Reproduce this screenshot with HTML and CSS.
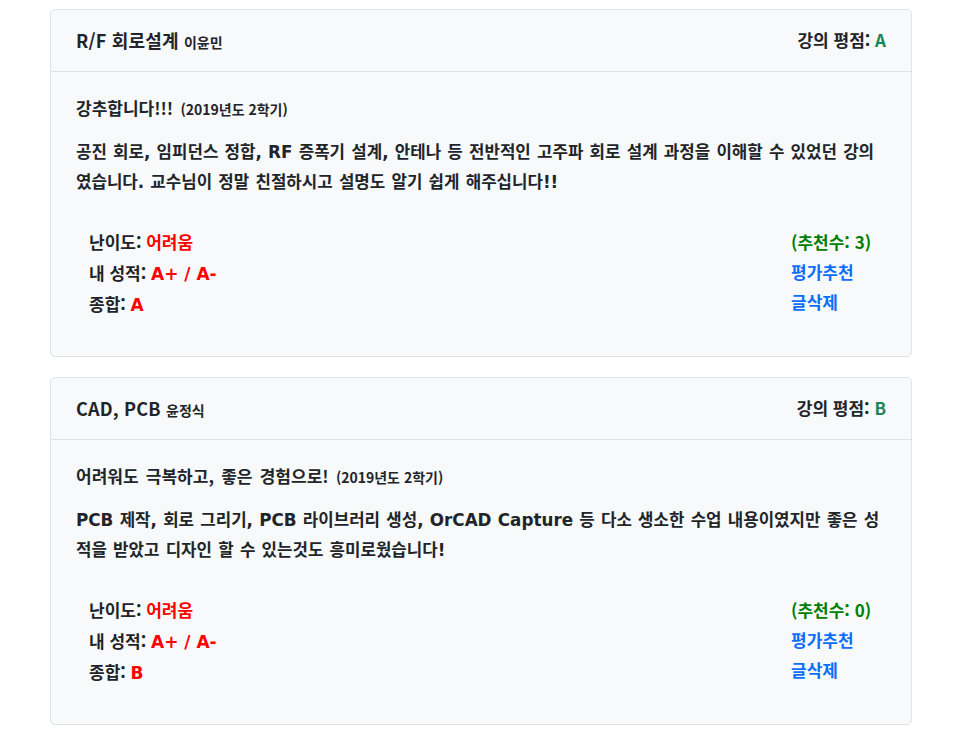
FILE: index.html
```html
<!DOCTYPE html>
<html lang="ko">
<head>
<meta charset="utf-8">
<link rel="stylesheet" href="styles.css">
</head>
<body>
<div class="list">
  <div class="card">
    <div class="card-header">
      <div class="course">R/F 회로설계 <span class="prof">이윤민</span></div>
      <div class="rating">강의 평점: <span class="grade">A</span></div>
    </div>
    <div class="card-body">
      <div class="title">강추합니다!!! <span class="term">(2019년도 2학기)</span></div>
      <p class="content">공진 회로, 임피던스 정합, RF 증폭기 설계, 안테나 등 전반적인 고주파 회로 설계 과정을 이해할 수 있었던 강의였습니다. 교수님이 정말 친절하시고 설명도 알기 쉽게 해주십니다!!</p>
      <div class="stats">
        <div class="left">
          <div>난이도: <span class="red">어려움</span></div>
          <div>내 성적: <span class="red">A+ / A-</span></div>
          <div>종합: <span class="red">A</span></div>
        </div>
        <div class="right">
          <div class="green">(추천수: 3)</div>
          <div><a class="link" href="#">평가추천</a></div>
          <div><a class="link" href="#">글삭제</a></div>
        </div>
      </div>
    </div>
  </div>
  <div class="card">
    <div class="card-header">
      <div class="course">CAD, PCB <span class="prof">윤정식</span></div>
      <div class="rating">강의 평점: <span class="grade">B</span></div>
    </div>
    <div class="card-body">
      <div class="title">어려워도 극복하고, 좋은 경험으로! <span class="term">(2019년도 2학기)</span></div>
      <p class="content">PCB 제작, 회로 그리기, PCB 라이브러리 생성, OrCAD Capture 등 다소 생소한 수업 내용이였지만 좋은 성적을 받았고 디자인 할 수 있는것도 흥미로웠습니다!</p>
      <div class="stats">
        <div class="left">
          <div>난이도: <span class="red">어려움</span></div>
          <div>내 성적: <span class="red">A+ / A-</span></div>
          <div>종합: <span class="red">B</span></div>
        </div>
        <div class="right">
          <div class="green">(추천수: 0)</div>
          <div><a class="link" href="#">평가추천</a></div>
          <div><a class="link" href="#">글삭제</a></div>
        </div>
      </div>
    </div>
  </div>
</div>
</body>
</html>
```
FILE: styles.css
```css
* { box-sizing: border-box; }
html, body { margin: 0; padding: 0; background: #fff; }
body {
  font-family: "Noto Sans CJK KR", "Noto Sans", sans-serif;
  color: #212529;
  font-weight: 700;
}
.list {
  width: 862px;
  margin: 9px 0 0 50px;
  display: flex;
  flex-direction: column;
  gap: 20px;
}
.card {
  background: #f8f9fa;
  border: 1px solid #dee2e6;
  border-radius: 5px;
}
.card-header {
  height: 62px;
  padding: 0 25px 2px;
  border-bottom: 1px solid #dee2e6;
  display: flex;
  align-items: center;
  justify-content: space-between;
}
.course { font-size: 18px; line-height: 24px; letter-spacing: 0.2px; }
.prof { font-size: 14px; line-height: 1; letter-spacing: 0; }
.rating { font-size: 17px; line-height: 24px; }
.card-body { padding: 25px 25px 36px; }
.title { font-size: 17px; line-height: 22px; word-spacing: 2.5px; }
.term { font-size: 14px; line-height: 1; word-spacing: 0; }
.content {
  margin: 18px 0 30px;
  font-family: "DejaVu Sans", "Noto Sans CJK KR", sans-serif;
  font-size: 16.8px;
  line-height: 30px;
  word-spacing: 0.4px;
}
.stats {
  display: grid;
  grid-template-columns: 1fr 82px;
  padding: 0 13px;
  font-size: 17px;
  line-height: 30px;
}
.stats .red { font-family: "DejaVu Sans", "Noto Sans CJK KR", sans-serif; }
.red { color: #ff0000; }
.green { color: #008000; }
.grade { color: #198754; }
.link { color: #0d6efd; text-decoration: none; }
```
